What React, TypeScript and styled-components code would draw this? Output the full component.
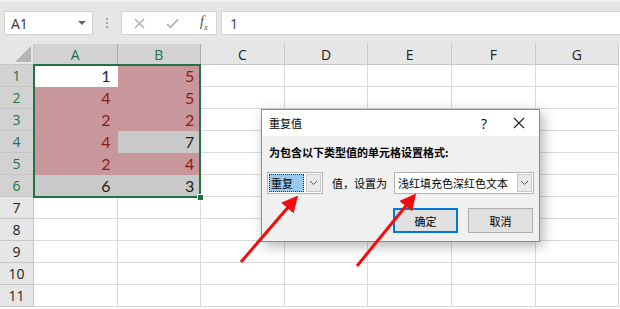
import React from 'react';
import styled, { createGlobalStyle } from 'styled-components';

const GlobalStyle = createGlobalStyle`
  html, body { margin: 0; padding: 0; background: #fff; }
  body { font-family: "Open Sans", "Noto Sans CJK SC", sans-serif; }
`;

type Fill = 'none' | 'white' | 'pink' | 'gray';

const cols = ['A', 'B', 'C', 'D', 'E', 'F', 'G'];

// values of the selected range, A1:B6
const data: { v: number; fill: Fill }[][] = [
    [{ v: 1, fill: 'white' }, { v: 5, fill: 'pink' }],
    [{ v: 4, fill: 'pink' }, { v: 5, fill: 'pink' }],
    [{ v: 2, fill: 'pink' }, { v: 2, fill: 'pink' }],
    [{ v: 4, fill: 'pink' }, { v: 7, fill: 'gray' }],
    [{ v: 2, fill: 'pink' }, { v: 4, fill: 'pink' }],
    [{ v: 6, fill: 'gray' }, { v: 3, fill: 'gray' }],
];

const ROWS = 11;

const App = () => {
    return (
        <Screen>
            <GlobalStyle />
            <FormulaBar>
                <NameBox>
                    A1
                    <DropTriangle />
                </NameBox>
                <Grip>
                    <i /><i /><i />
                </Grip>
                <FxButtons>
                    <svg width="11" height="11" viewBox="0 0 11 11">
                        <path d="M1 1 L10 10 M10 1 L1 10" stroke="#a8a8a8" strokeWidth="1.2" fill="none" />
                    </svg>
                    <svg width="13" height="11" viewBox="0 0 13 11">
                        <path d="M1 6 L4.5 9.5 L12 1.5" stroke="#a8a8a8" strokeWidth="1.4" fill="none" />
                    </svg>
                    <Fx>f<sub>x</sub></Fx>
                </FxButtons>
                <FormulaInput>1</FormulaInput>
            </FormulaBar>

            <SheetWrap>
                <Sheet>
                    <Corner>
                        <svg width="16" height="16" viewBox="0 0 16 16">
                            <polygon points="16,0 16,16 0,16" fill="#b5b5b5" />
                        </svg>
                    </Corner>
                    {cols.map((c, i) => (
                        <ColHead key={c} $selected={i < 2}>{c}</ColHead>
                    ))}
                    {Array.from({ length: ROWS }).map((_, r) => (
                        <React.Fragment key={r}>
                            <RowHead $selected={r < 6}>{r + 1}</RowHead>
                            {cols.map((c, ci) => {
                                const cell = r < 6 && ci < 2 ? data[r][ci] : null;
                                return (
                                    <Cell key={c} $fill={cell ? cell.fill : 'none'}>
                                        {cell ? cell.v : ''}
                                    </Cell>
                                );
                            })}
                        </React.Fragment>
                    ))}
                </Sheet>
                <SelectionBox>
                    <FillHandle />
                </SelectionBox>
            </SheetWrap>

            <Dialog>
                <TitleBar>
                    <Title>重复值</Title>
                    <TitleTools>
                        <span>?</span>
                        <svg width="12" height="12" viewBox="0 0 12 12">
                            <path d="M1 1 L11 11 M11 1 L1 11" stroke="#222" strokeWidth="1.1" fill="none" />
                        </svg>
                    </TitleTools>
                </TitleBar>
                <DialogBody>
                    <Prompt>为包含以下类型值的单元格设置格式:</Prompt>
                    <ControlRow>
                        <Combo $width={56}>
                            <ComboValue $highlight>重复</ComboValue>
                            <ComboButton><Chevron /></ComboButton>
                        </Combo>
                        <Label>值，设置为</Label>
                        <Combo $width={140}>
                            <ComboValue>浅红填充色深红色文本</ComboValue>
                            <ComboButton><Chevron /></ComboButton>
                        </Combo>
                    </ControlRow>
                    <ButtonRow>
                        <DlgButton $default>确定</DlgButton>
                        <DlgButton>取消</DlgButton>
                    </ButtonRow>
                </DialogBody>
            </Dialog>

            <Arrows width="620" height="309" viewBox="0 0 620 309">
                <defs>
                    <marker id="head" viewBox="0 0 10 10" refX="8" refY="5" markerWidth="5.5" markerHeight="5.5" orient="auto">
                        <path d="M0 0 L10 5 L0 10 Z" fill="#f20d0d" />
                    </marker>
                </defs>
                <line x1="241" y1="262" x2="296" y2="198" stroke="#f20d0d" strokeWidth="3" markerEnd="url(#head)" />
                <line x1="357" y1="266" x2="414" y2="196" stroke="#f20d0d" strokeWidth="3" markerEnd="url(#head)" />
            </Arrows>
        </Screen>
    );
};

const Chevron = () => (
    <svg width="9" height="6" viewBox="0 0 9 6">
        <path d="M1 1 L4.5 4.5 L8 1" stroke="#555" strokeWidth="1" fill="none" />
    </svg>
);

const Screen = styled.div`
    position: relative;
    width: 620px;
    height: 309px;
    overflow: hidden;
    background: #fff;
`;

const FormulaBar = styled.div`
    height: 44px;
    box-sizing: border-box;
    background: #e6e6e6;
    border-top: 2px solid #f3f3f3;
    display: flex;
    align-items: flex-start;
    padding: 9px 0 0 4px;
`;

const WhiteBox = styled.div`
    height: 24px;
    box-sizing: border-box;
    background: #fff;
    border: 1px solid #d2d2d2;
    display: flex;
    align-items: center;
`;

const NameBox = styled(WhiteBox)`
    width: 89px;
    padding: 0 6px 0 6px;
    justify-content: space-between;
    font-size: 14px;
    color: #333;
`;

const DropTriangle = styled.span`
    width: 0;
    height: 0;
    border-left: 4px solid transparent;
    border-right: 4px solid transparent;
    border-top: 4px solid #666;
`;

const Grip = styled.div`
    width: 28px;
    height: 24px;
    display: flex;
    flex-direction: column;
    align-items: center;
    justify-content: center;
    gap: 2px;

    i {
        width: 2px;
        height: 2px;
        background: #a5a5a5;
    }
`;

const FxButtons = styled(WhiteBox)`
    width: 96px;
    padding: 0 8px 0 12px;
    justify-content: space-between;
`;

const Fx = styled.span`
    font-family: "Liberation Serif", serif;
    font-style: italic;
    font-size: 14px;
    color: #555;

    sub {
        font-size: 9px;
    }
`;

const FormulaInput = styled(WhiteBox)`
    flex: 1;
    margin-left: 4px;
    border-right: none;
    padding-left: 8px;
    font-size: 14px;
    color: #1e3f75;
`;

const SheetWrap = styled.div`
    position: relative;
`;

const Sheet = styled.div`
    display: grid;
    grid-template-columns: 34px repeat(7, 83.6px);
    grid-template-rows: 21px repeat(11, 22px);
`;

const Corner = styled.div`
    background: #e6e6e6;
    border-right: 1px solid #c6c6c6;
    border-bottom: 1px solid #c6c6c6;
    box-sizing: border-box;
    display: flex;
    align-items: flex-end;
    justify-content: flex-end;
    padding: 0 2px 2px 0;
`;

const ColHead = styled.div<{ $selected?: boolean }>`
    box-sizing: border-box;
    background: ${p => (p.$selected ? '#d2d2d2' : '#e6e6e6')};
    color: ${p => (p.$selected ? '#217346' : '#222')};
    border-right: 1px solid ${p => (p.$selected ? '#ababab' : '#c6c6c6')};
    border-bottom: 1px solid ${p => (p.$selected ? '#217346' : '#c6c6c6')};
    font-size: 14px;
    display: flex;
    align-items: center;
    justify-content: center;
`;

const RowHead = styled.div<{ $selected?: boolean }>`
    box-sizing: border-box;
    background: ${p => (p.$selected ? '#d2d2d2' : '#e6e6e6')};
    color: ${p => (p.$selected ? '#217346' : '#222')};
    border-right: 1px solid ${p => (p.$selected ? '#217346' : '#c6c6c6')};
    border-bottom: 1px solid #c6c6c6;
    font-size: 14px;
    display: flex;
    align-items: center;
    justify-content: center;
`;

const fills: Record<Fill, { bg: string; color: string }> = {
    none: { bg: '#fff', color: '#000' },
    white: { bg: '#fff', color: '#1c1c4a' },
    pink: { bg: '#c8979b', color: '#8e1a1f' },
    gray: { bg: '#c9c9c9', color: '#222' },
};

const Cell = styled.div<{ $fill: Fill }>`
    box-sizing: border-box;
    background: ${p => fills[p.$fill].bg};
    color: ${p => fills[p.$fill].color};
    border-right: 1px solid ${p => (p.$fill === 'none' ? '#dadada' : 'transparent')};
    border-bottom: 1px solid ${p => (p.$fill === 'none' ? '#dadada' : 'transparent')};
    font-family: Lato, "Liberation Sans", sans-serif;
    font-size: 16px;
    display: flex;
    align-items: flex-end;
    justify-content: flex-end;
    padding: 0 6px 0 0;
    line-height: 20px;
`;

const SelectionBox = styled.div`
    position: absolute;
    left: 33px;
    top: 20px;
    width: 168px;
    height: 134px;
    box-sizing: border-box;
    border: 2px solid #217346;
    pointer-events: none;
`;

const FillHandle = styled.div`
    position: absolute;
    right: -5px;
    bottom: -5px;
    width: 5px;
    height: 5px;
    background: #217346;
    border: 1px solid #fff;
`;

const Dialog = styled.div`
    position: absolute;
    left: 261px;
    top: 109px;
    width: 279px;
    height: 133px;
    box-sizing: border-box;
    border: 1px solid #8a8a8a;
    background: #f0f0f0;
    box-shadow: 3px 4px 12px rgba(0, 0, 0, 0.3);
    font-family: "Noto Sans CJK SC", sans-serif;
    font-size: 11px;
    color: #000;
    display: flex;
    flex-direction: column;
`;

const TitleBar = styled.div`
    height: 26px;
    background: #fff;
    display: flex;
    align-items: center;
    justify-content: space-between;
    padding: 0 14px 0 7px;
`;

const Title = styled.span`
    font-size: 11px;
`;

const TitleTools = styled.div`
    display: flex;
    align-items: center;
    gap: 26px;
    font-family: "Open Sans", sans-serif;
    font-size: 14px;
`;

const DialogBody = styled.div`
    flex: 1;
    padding: 6px 6px 0 5px;
    display: flex;
    flex-direction: column;
`;

const Prompt = styled.div`
    font-weight: bold;
    padding-left: 2px;
    height: 20px;
    line-height: 20px;
    white-space: nowrap;
`;

const ControlRow = styled.div`
    display: flex;
    align-items: center;
    margin-top: 10px;
`;

const Combo = styled.div<{ $width: number }>`
    width: ${p => p.$width}px;
    height: 22px;
    flex-shrink: 0;
    box-sizing: border-box;
    border: 1px solid #b4b4b4;
    background: #fff;
    display: flex;
    align-items: stretch;
    padding: 1px;
`;

const ComboValue = styled.div<{ $highlight?: boolean }>`
    flex: 1;
    display: flex;
    align-items: center;
    padding-left: 2px;
    margin-right: 2px;
    background: ${p => (p.$highlight ? '#99c9ef' : 'transparent')};
    outline: ${p => (p.$highlight ? '1px dotted #333' : 'none')};
    outline-offset: -1px;
    white-space: nowrap;
    overflow: hidden;
`;

const ComboButton = styled.div`
    width: 15px;
    flex-shrink: 0;
    background: #e9e9e9;
    border: 1px solid #c8c8c8;
    box-sizing: border-box;
    display: flex;
    align-items: center;
    justify-content: center;
`;

const Label = styled.span`
    width: 71px;
    padding-left: 9px;
    box-sizing: border-box;
    white-space: nowrap;
    flex-shrink: 0;
`;

const ButtonRow = styled.div`
    display: flex;
    justify-content: flex-end;
    gap: 10px;
    margin-top: 14px;
`;

const DlgButton = styled.div<{ $default?: boolean }>`
    width: 65px;
    height: 25px;
    box-sizing: border-box;
    background: #e1e1e1;
    border: ${p => (p.$default ? '2px solid #0078d7' : '1px solid #adadad')};
    display: flex;
    align-items: center;
    justify-content: center;
`;

const Arrows = styled.svg`
    position: absolute;
    left: 0;
    top: 0;
    pointer-events: none;
`;

export default App;
